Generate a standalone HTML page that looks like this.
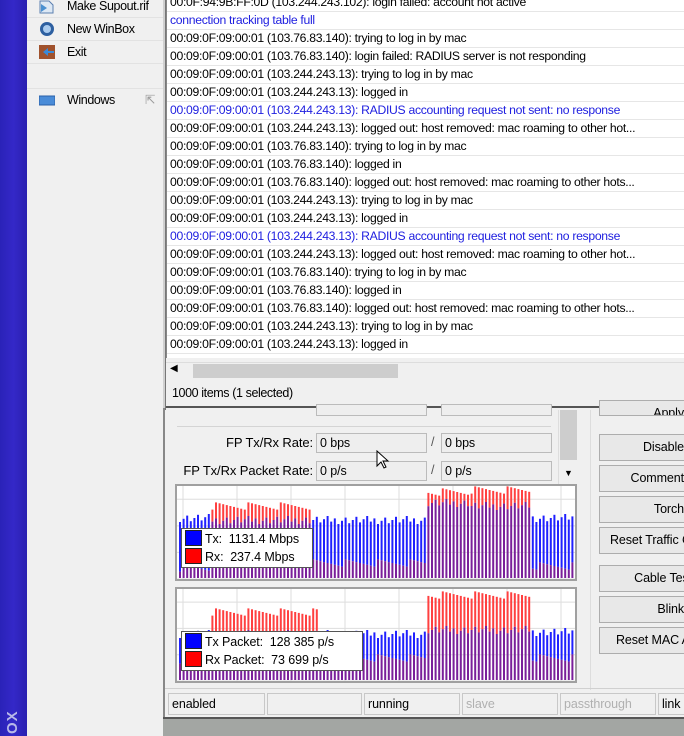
<!DOCTYPE html>
<html><head><meta charset="utf-8"><style>
*{margin:0;padding:0;box-sizing:border-box}
body{width:684px;height:736px;overflow:hidden;background:#f0f0f0;font-family:"Liberation Sans",sans-serif;font-size:12.5px;color:#000;position:relative;letter-spacing:-0.1px}
.abs{position:absolute}
#bar{left:0;top:0;width:27px;height:736px;background:linear-gradient(90deg,#2a22b8,#3428c8 50%,#2a20b0)}
#bar span{position:absolute;left:4px;color:#b8b8e8;font-weight:bold;font-size:15px;transform:rotate(-90deg);transform-origin:left top;top:734px;letter-spacing:1px}
.mi{left:27px;width:136px;height:23px;border-bottom:1px solid #e2e2e2;padding-left:40px;line-height:22px;font-size:12.5px;letter-spacing:-0.4px}
.ic{position:absolute;left:12px;top:4px;width:16px;height:14px}
#log{left:166px;top:0;width:518px;height:358px;background:#fff;border-left:1px solid #888;overflow:hidden}
.r{height:18px;line-height:17px;border-bottom:1px solid #e6e6e6;padding-left:3px;white-space:nowrap;overflow:hidden;font-size:12.2px;letter-spacing:-0.3px}
.b{color:#2020e0}
#hs{left:166px;top:362px;width:518px;height:17px;background:#f0f0f0;border-top:1px solid #ddd}
#lower{left:163px;top:408px;width:521px;height:310px;border-left:2px solid #888}
.fl{height:20px;border:1px solid #bbb;background:#eee;line-height:18px;padding-left:3px;font-size:12.5px}
#btns{left:599px;top:0;width:85px;height:736px;overflow:hidden}
.btn{left:0;width:100px;height:27px;border:1px solid #adadad;background:#e8e8e8;text-align:right;padding-right:14px;line-height:25px;font-size:12.5px;white-space:nowrap}
.leg{background:#fff;border:1px solid #555;font-size:12.5px;line-height:18px;padding:1px 3px;white-space:nowrap}
.sw{display:inline-block;width:17px;height:16px;vertical-align:-3px;border:1px solid #222;margin-right:3px}
.st{top:693px;height:22px;border:1px solid #c8c8c8;line-height:20px;padding-left:3px;font-size:12.5px;background:#f0f0f0;overflow:hidden;white-space:nowrap}
</style></head><body>
<div id="bar" class="abs"><span>OX</span></div>
<div class="abs mi" style="top:-5px"><svg class="ic" style="top:5px" viewBox="0 0 16 14"><path d="M1 1h9l4 4v8H1z" fill="#dde8f4" stroke="#5b7fb0"/><path d="M2 4l6 4-6 4z" fill="#4a90d0"/></svg>Make Supout.rif</div>
<div class="abs mi" style="top:18px"><svg class="ic" viewBox="0 0 16 14"><circle cx="8" cy="7" r="7" fill="#2d5fa0"/><circle cx="8" cy="7" r="4" fill="#aacbee"/></svg>New WinBox</div>
<div class="abs mi" style="top:41px"><svg class="ic" viewBox="0 0 16 14"><rect width="16" height="14" fill="#a0522d"/><path d="M9 3L4 7l5 4z" fill="#3a8ad8"/><rect x="9" y="6" width="6" height="2" fill="#3a8ad8"/></svg>Exit</div>
<div class="abs mi" style="top:64px;height:25px"></div>
<div class="abs mi" style="top:89px;border:none"><svg class="ic" viewBox="0 0 16 14"><rect x="0" y="3" width="16" height="9" fill="#4a8cd8" stroke="#2a60a8"/></svg>Windows<span style="position:absolute;left:118px;color:#999">&#8689;</span></div>
<div class="abs" style="left:163px;top:0;width:3px;height:410px;background:#d0d0d0;border-right:1px solid #777"></div>
<div id="log" class="abs"><div style="margin-top:-6px">
<div class="r">00:0F:94:9B:FF:0D (103.244.243.102): login failed: account not active</div>
<div class="r b">connection tracking table full</div>
<div class="r">00:09:0F:09:00:01 (103.76.83.140): trying to log in by mac</div>
<div class="r">00:09:0F:09:00:01 (103.76.83.140): login failed: RADIUS server is not responding</div>
<div class="r">00:09:0F:09:00:01 (103.244.243.13): trying to log in by mac</div>
<div class="r">00:09:0F:09:00:01 (103.244.243.13): logged in</div>
<div class="r b">00:09:0F:09:00:01 (103.244.243.13): RADIUS accounting request not sent: no response</div>
<div class="r">00:09:0F:09:00:01 (103.244.243.13): logged out: host removed: mac roaming to other hot...</div>
<div class="r">00:09:0F:09:00:01 (103.76.83.140): trying to log in by mac</div>
<div class="r">00:09:0F:09:00:01 (103.76.83.140): logged in</div>
<div class="r">00:09:0F:09:00:01 (103.76.83.140): logged out: host removed: mac roaming to other hots...</div>
<div class="r">00:09:0F:09:00:01 (103.244.243.13): trying to log in by mac</div>
<div class="r">00:09:0F:09:00:01 (103.244.243.13): logged in</div>
<div class="r b">00:09:0F:09:00:01 (103.244.243.13): RADIUS accounting request not sent: no response</div>
<div class="r">00:09:0F:09:00:01 (103.244.243.13): logged out: host removed: mac roaming to other hot...</div>
<div class="r">00:09:0F:09:00:01 (103.76.83.140): trying to log in by mac</div>
<div class="r">00:09:0F:09:00:01 (103.76.83.140): logged in</div>
<div class="r">00:09:0F:09:00:01 (103.76.83.140): logged out: host removed: mac roaming to other hots...</div>
<div class="r">00:09:0F:09:00:01 (103.244.243.13): trying to log in by mac</div>
<div class="r">00:09:0F:09:00:01 (103.244.243.13): logged in</div>
</div></div>
<div id="hs" class="abs"><span style="position:absolute;left:4px;top:0;font-size:10px">&#9664;</span><div style="position:absolute;left:27px;top:1px;width:205px;height:14px;background:#cdcdcd"></div></div>
<div class="abs" style="left:166px;top:380px;width:518px;height:28px;background:#f0f0f0;border-bottom:2px solid #555;padding:6px 0 0 6px;font-size:12.5px;letter-spacing:-0.4px">1000 items (1 selected)</div>
<div id="lower" class="abs"></div>
<div class="abs fl" style="left:316px;top:404px;width:111px;height:12px"></div>
<div class="abs fl" style="left:441px;top:404px;width:111px;height:12px"></div>
<div class="abs" style="left:177px;top:426px;width:374px;height:1px;background:#d4d4d4"></div>
<div class="abs" style="left:165px;top:435px;width:148px;text-align:right;font-size:13px">FP Tx/Rx Rate:</div>
<div class="abs fl" style="left:316px;top:433px;width:111px">0 bps</div>
<div class="abs" style="left:431px;top:435px;color:#555">/</div>
<div class="abs fl" style="left:441px;top:433px;width:111px">0 bps</div>
<div class="abs" style="left:160px;top:463px;width:153px;text-align:right;font-size:13px">FP Tx/Rx Packet Rate:</div>
<div class="abs fl" style="left:316px;top:461px;width:111px">0 p/s</div>
<div class="abs" style="left:431px;top:463px;color:#555">/</div>
<div class="abs fl" style="left:441px;top:461px;width:111px">0 p/s</div>
<div class="abs" style="left:558px;top:410px;width:19px;height:74px;background:#f0f0f0;border-left:1px solid #ddd"><div style="position:absolute;left:1px;top:0;width:17px;height:50px;background:#cdcdcd"></div><span style="position:absolute;left:5px;top:58px;font-size:9px">&#9660;</span></div>
<svg class="abs" style="left:376px;top:450px" width="14" height="20" viewBox="0 0 14 20"><path d="M1 1v15l4-4 3 6 2-1-3-6h5z" fill="#fff" stroke="#000"/></svg>
<div class="abs" style="left:175px;top:484px;width:402px;height:97px;border:2px solid #a0a0a0;background:#fff"><svg id="g1" width="398" height="93"></svg></div>
<div class="abs" style="left:175px;top:587px;width:402px;height:96px;border:2px solid #a0a0a0;background:#fff"><svg id="g2" width="398" height="92"></svg></div>
<div class="abs leg" style="left:181px;top:528px;width:132px"><div><span class="sw" style="background:#0000ff"></span>Tx:&nbsp; 1131.4 Mbps</div><div><span class="sw" style="background:#ff0000"></span>Rx:&nbsp; 237.4 Mbps</div></div>
<div class="abs leg" style="left:181px;top:631px;width:182px"><div><span class="sw" style="background:#0000ff"></span>Tx Packet:&nbsp; 128 385 p/s</div><div><span class="sw" style="background:#ff0000"></span>Rx Packet:&nbsp; 73 699 p/s</div></div>
<div class="abs" style="left:590px;top:410px;width:1px;height:280px;background:#ddd"></div>
<div id="btns" class="abs">
<div class="abs btn" style="top:400px;height:16px;line-height:24px;overflow:hidden">Apply</div>
<div class="abs btn" style="top:434px">Disable</div>
<div class="abs btn" style="top:465px">Comment</div>
<div class="abs btn" style="top:496px">Torch</div>
<div class="abs btn" style="top:527px;padding-right:0;text-align:left;padding-left:10px">Reset Traffic Counters</div>
<div class="abs btn" style="top:565px;padding-right:6px">Cable Test</div>
<div class="abs btn" style="top:596px">Blink</div>
<div class="abs btn" style="top:627px;text-align:left;padding-left:16px">Reset MAC Address</div>
</div>
<div class="abs" style="left:165px;top:688px;width:519px;height:1px;background:#d0d0d0"></div>
<div class="abs st" style="left:168px;width:97px">enabled</div>
<div class="abs st" style="left:267px;width:95px"></div>
<div class="abs st" style="left:364px;width:96px">running</div>
<div class="abs st" style="left:462px;width:96px;color:#b0b0b0">slave</div>
<div class="abs st" style="left:560px;width:96px;color:#b0b0b0">passthrough</div>
<div class="abs st" style="left:658px;width:26px;border-right:none">link</div>
<div class="abs" style="left:163px;top:717px;width:521px;height:19px;background:#a3a6a3;border-top:2px solid #555"></div>
<script>
function draw(id,h,segs,base){
var s=document.getElementById(id),o='';
for(var x=6;x<398;x+=54){o+='<line x1="'+x+'" y1="0" x2="'+x+'" y2="'+h+'" stroke="#ddd"/>';}
for(var y=h;y>0;y-=h/3.5){o+='<line x1="0" y1="'+y+'" x2="398" y2="'+y+'" stroke="#ddd"/>';}
var i=0;
for(var x=2;x<396;x+=3.6,i++){
var px=x+178,b=0,r=0;
for(var k=0;k<segs.length;k++){if(px>=segs[k][0]&&px<segs[k][1]){b=segs[k][2];r=segs[k][3];}}
var j=((i*37)%11)-5;b+=j*0.8;r+=((i*53)%9-4)*0.9;
var m=Math.min(b,r);
if(b>r)o+='<rect x="'+x+'" y="'+(base-b)+'" width="2" height="'+(b-m)+'" fill="#2020ff"/>';
else o+='<rect x="'+x+'" y="'+(base-r)+'" width="2" height="'+(r-m)+'" fill="#ff4040"/>';
o+='<rect x="'+x+'" y="'+(base-m)+'" width="2" height="'+m+'" fill="#7a1f9a"/>';
}
s.innerHTML=o;}
draw('g1',93,[[178,210,60,10],[210,313,58,72],[313,425,58,15],[425,470,75,86],[470,530,72,88],[530,580,60,12]],92);
draw('g2',92,[[178,210,46,20],[210,318,46,68],[318,425,46,22],[425,530,50,85],[530,580,48,22]],91);
</script>
</body></html>
